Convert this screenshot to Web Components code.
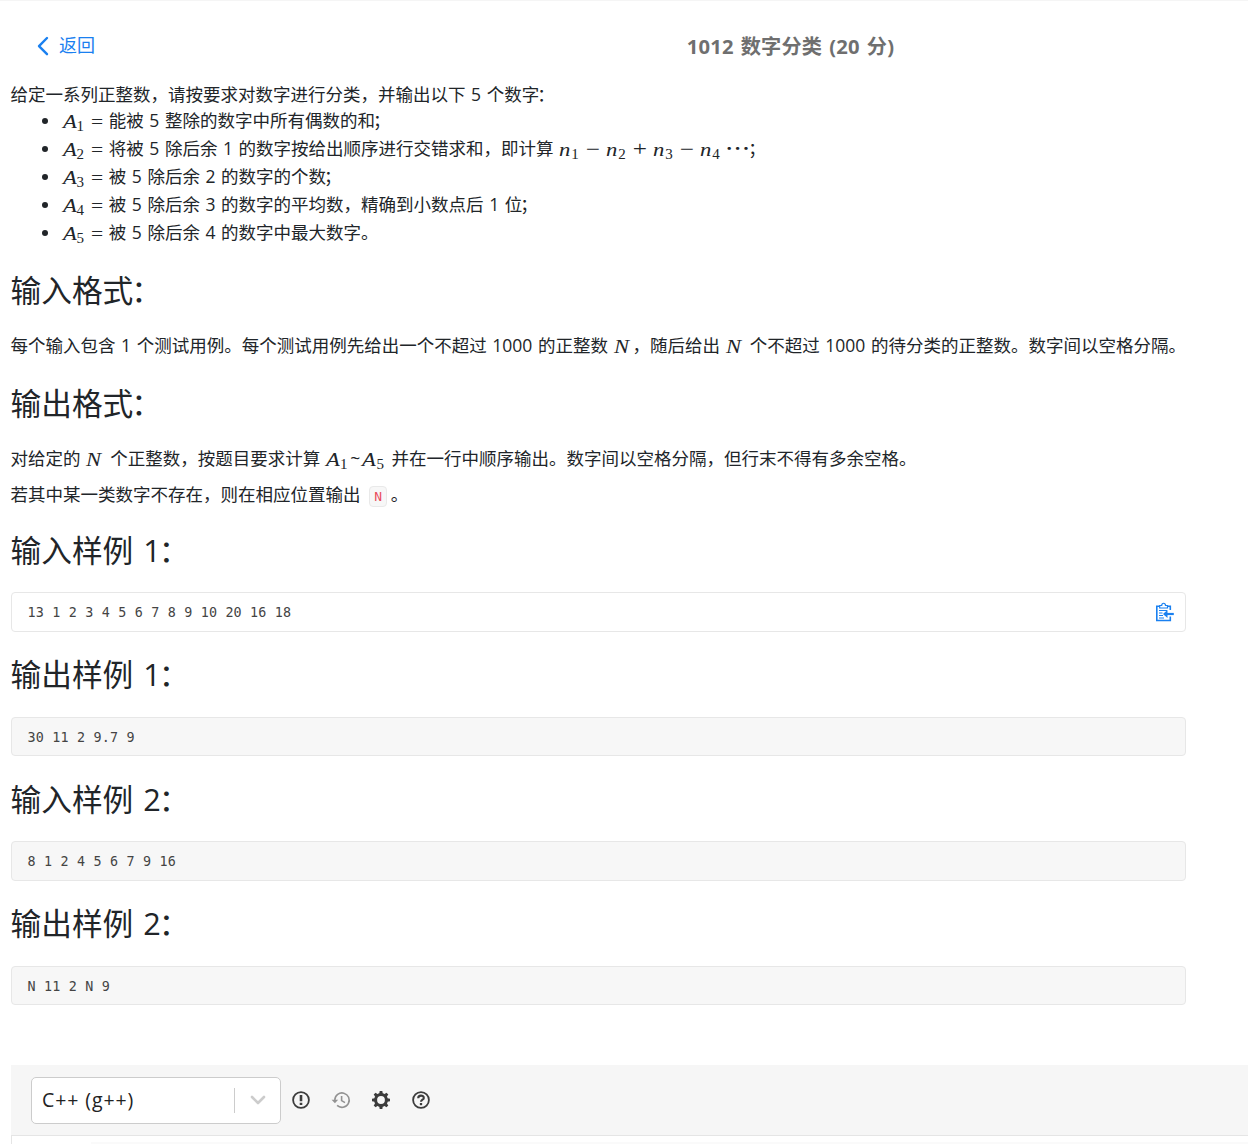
<!DOCTYPE html>
<html lang="zh-CN">
<head>
<meta charset="utf-8">
<title>1012 数字分类</title>
<style>
html,body{margin:0;height:1144px;overflow:hidden;background:#fff}
body{font-family:"Open Sans","Noto Sans CJK SC",sans-serif;font-size:17.5px;color:#212529}
</style>
</head>
<body>
<problem-page></problem-page>
<script>
const define=(name,css,html,hook)=>customElements.define(name,class extends HTMLElement{
  connectedCallback(){
    if(this.shadowRoot)return;
    const t=document.createElement('template');
    t.innerHTML='<style>'+css+'</style>'+html;
    this.attachShadow({mode:'open'}).append(t.content.cloneNode(true));
    if(hook)hook.call(this,this.shadowRoot);
  }
});

define('math-var',
 ':host{display:inline-block;white-space:nowrap;line-height:1;font-family:"Liberation Serif",serif;letter-spacing:0;word-spacing:0;vertical-align:-1px}i{display:inline-block;font-size:19.5px;transform:scaleX(1.16);transform-origin:0 50%;margin-right:2.200px}sub{font-size:15px;vertical-align:-2.5px;line-height:0}',
 '<i></i><sub></sub>',
 function(r){
  this.style.width=this.getAttribute('w')+'px';
  r.querySelector('i').textContent=this.getAttribute('v');
  const s=r.querySelector('sub');
  if(this.hasAttribute('s'))s.textContent=this.getAttribute('s');else s.remove();
 });

define('math-op',
 ':host{display:inline-block;text-align:center;line-height:1;font-family:"Liberation Serif",serif;font-size:21px;word-spacing:0;vertical-align:-1px}span{display:inline-block;transform:scaleX(1.2)}',
 '<span><slot></slot></span>',function(){this.style.width=this.getAttribute('w')+'px';});

define('text-line',
 ':host{display:block;white-space:nowrap;line-height:26px;height:28px;word-spacing:1.05px}',
 '<slot></slot>');

define('bullet-item',
 ':host{display:flex;align-items:center;height:28px;line-height:28px;padding-left:31px;white-space:nowrap;word-spacing:1.05px}b{width:6px;height:6px;border-radius:50%;background:#212529;margin-right:15px}div{height:28px;line-height:26px}',
 '<b></b><div><slot></slot></div>');

define('section-title',
 ':host{display:block;height:40px}h3{margin:0;font-size:30.7px;line-height:38px;font-weight:400;white-space:nowrap;word-spacing:2px}span{margin-left:-2px}',
 '<h3><slot></slot><span>：</span></h3>');

define('inline-code',
 ':host{display:inline-block;box-sizing:border-box;width:18px;height:21px;border:1px solid #e9e9e9;border-radius:4px;background:#f7f7f7;color:#e94b5b;text-align:center;font:13px/19px "DejaVu Sans Mono",monospace;vertical-align:.5px;margin:0 -2px 0 3px;word-spacing:0}',
 '<slot></slot>');

define('sample-block',
 ':host{display:flex;box-sizing:border-box;align-items:center;justify-content:space-between;height:var(--h,39px);border:1px solid #e7e7e7;border-radius:4px;background:#f7f7f7;padding:0 10px 0 15.5px;margin-left:.5px}:host([editable]){background:#fff}code{font:13.4px/20px "DejaVu Sans Mono",monospace;letter-spacing:.183px;color:#444;white-space:pre;padding-top:2px}',
 '<code><slot></slot></code><slot name="icon"></slot>');

define('paste-icon',
 ':host{display:block;width:20px;height:20px}svg{display:block}',
 `<svg width="20" height="20" viewBox="0 0 20 20" fill="none" stroke="#1a80f0">
  <path d="M15.3 8V4.2H1.8v14.3h13.5v-4" stroke-width="1.6"/>
  <path d="M4.700 6V3.500h2c.1-3 3.700-3 3.800 0h2V6z" fill="#fff" stroke-width="1.200"/>
  <path d="M4 8.500h8M4 11h3.500M4 13.500h4M4 16h5" stroke-width="1.200"/>
  <path d="M9.500 12h9.300" stroke-width="2.200"/><path d="M12.500 8 8 12l4.500 4z" fill="#1a80f0" stroke="none"/></svg>`);

define('back-link',
 ':host{display:flex;align-items:center;color:#1a80f0;font-size:18px;line-height:28px;height:28px}svg{margin-right:10px}span{padding-bottom:2px}',
 '<svg width="12" height="20" viewBox="0 0 12 20" fill="none" stroke="currentColor" stroke-width="2.400" stroke-linecap="round" stroke-linejoin="round"><path d="M10 2 2 10.200l8 8"/></svg><span><slot></slot></span>');

define('page-header',
 ':host{display:grid;grid-template-columns:333px 1fr;align-items:start;height:82px;box-sizing:border-box;border-top:1px solid #f5f5f5;padding:31px 0 0 37px}h1{margin:0;text-align:center;font-size:20.2px;line-height:28px;font-weight:700;color:#6f6f6f;word-spacing:1.6px;letter-spacing:.2px;width:841px}',
 '<back-link>返回</back-link><h1>1012 数字分类 (20 分)</h1>');

define('language-select',
 ':host{display:flex;box-sizing:border-box;width:250px;height:47px;border:1px solid #ccc;border-radius:5px;background:#fff;align-items:center;padding-left:10px;font-size:19.5px;color:#222}span{flex:1;white-space:nowrap;letter-spacing:.9px;padding-bottom:1px}i{width:1px;height:25px;background:#ccc;margin-right:15px}svg{margin-right:14px}',
 '<span><slot></slot></span><i></i><svg width="16" height="10" viewBox="0 0 16 10" fill="none" stroke="#ccc" stroke-width="2.600" stroke-linecap="round" stroke-linejoin="round"><path d="m2 2 6 6 6-6"/></svg>');

define('tool-icon',
 ':host{display:block;width:20px;height:20px}svg{display:block}',
 '<svg width="20" height="20" viewBox="0 0 20 20" fill="none" stroke="#3c3c3c" stroke-width="2"></svg>',
 function(r){
  let teeth='';
  for(let a=0;a<360;a+=45)teeth+=`<path d="M8 5 8.700 1h2.600l.7 4z" fill="#3c3c3c" stroke="none" transform="rotate(${a} 10 10)"/>`;
  r.querySelector('svg').innerHTML={
   alert:'<circle cx="10" cy="10" r="7.900" stroke-width="1.800"/><path d="M10 5v6.200M10 12.700v2.300" stroke-width="2.600"/>',
   history:'<g stroke="#929292" stroke-width="1.600"><path d="M3.800 10a7.200 7.200 0 1 1 2.300 5.400"/><path d="M10.600 6v4.600l3.400 2"/><path d="M.6 9.700h6.600l-3.300 3.500z" fill="#929292" stroke="none"/></g>',
   gear:'<circle cx="10" cy="10" r="5.400" stroke-width="3"/>'+teeth,
   help:'<circle cx="10" cy="10" r="7.900" stroke-width="1.800"/><path d="M7.200 8.200c0-3.500 5.600-3.300 5.600-.3 0 1.900-2.800 1.800-2.800 3.900" stroke-width="2.100"/><path d="M10 13v2.200" stroke-width="2.300"/>'
  }[this.getAttribute('kind')];
 });

define('editor-bar',
 ':host{display:block;margin:60px 0 0 11px}.bar{display:flex;align-items:center;gap:20px;height:70px;background:#f6f6f6;border-bottom:1px solid #e5e5e5;padding-left:20px}language-select{margin-right:-10px}.edit{height:8px;border-left:1px solid #e5e5e5;display:flex;align-items:flex-end}.edit i{flex:1;height:2px;margin-left:79px;background:#fafafa}',
 '<div class="bar"><language-select>C++ (g++)</language-select><tool-icon kind="alert"></tool-icon><tool-icon kind="history"></tool-icon><tool-icon kind="gear"></tool-icon><tool-icon kind="help"></tool-icon></div><div class="edit"><i></i></div>');

const A=n=>`<math-var v="A" s="${n}" w="23.500"></math-var> <math-op w="11.500" style="font-size:18px">=</math-op> `;
define('problem-page',
 `:host{display:block}main{width:1175.5px;padding-left:10.5px}
 .intro{height:25px;line-height:24px}
 .tilde{display:inline-block;width:12px;text-align:center;padding-right:1px}
 .end{margin-left:-2px}
 section-title{margin-top:20px}`,
 `<page-header></page-header>
 <main>
 <text-line class="intro">给定一系列正整数，请按要求对数字进行分类，并输出以下 5 个数字<span class="end">：</span></text-line>
 <bullet-item>${A(1)}能被 5 整除的数字中所有偶数的和<span class="end">；</span></bullet-item>
 <bullet-item>${A(2)}将被 5 除后余 1 的数字按给出顺序进行交错求和，即计算 <math-var v="n" s="1" w="21"></math-var><math-op w="26">−</math-op><math-var v="n" s="2" w="21"></math-var><math-op w="26">+</math-op><math-var v="n" s="3" w="21"></math-var><math-op w="26">−</math-op><math-var v="n" s="4" w="23"></math-var><math-op w="28">⋯</math-op><span style="margin-left:-3px">；</span></bullet-item>
 <bullet-item>${A(3)}被 5 除后余 2 的数字的个数<span class="end">；</span></bullet-item>
 <bullet-item>${A(4)}被 5 除后余 3 的数字的平均数，精确到小数点后 1 位<span class="end">；</span></bullet-item>
 <bullet-item>${A(5)}被 5 除后余 4 的数字中最大数字。</bullet-item>
 <section-title style="margin-top:24px">输入格式</section-title>
 <text-line style="margin-top:21px">每个输入包含 1 个测试用例。每个测试用例先给出一个不超过 1000 的正整数 <math-var v="N" w="19"></math-var>，随后给出 <math-var v="N" w="18.500"></math-var> 个不超过 1000 的待分类的正整数。数字间以空格分隔。</text-line>
 <section-title style="margin-top:24px">输出格式</section-title>
 <text-line style="margin-top:21px">对给定的 <math-var v="N" w="18.500"></math-var> 个正整数，按题目要求计算 <math-var v="A" s="1" w="23.500"></math-var><span class="tilde">~</span><math-var v="A" s="5" w="23.500"></math-var> 并在一行中顺序输出。数字间以空格分隔，但行末不得有多余空格。</text-line>
 <text-line style="margin-top:8px">若其中某一类数字不存在，则在相应位置输出 <inline-code>N</inline-code> 。</text-line>
 <section-title style="margin-top:22px">输入样例 1</section-title>
 <sample-block editable style="margin-top:21px;--h:40px">13 1 2 3 4 5 6 7 8 9 10 20 16 18<paste-icon slot="icon"></paste-icon></sample-block>
 <section-title style="margin-top:23px">输出样例 1</section-title>
 <sample-block style="margin-top:22px">30 11 2 9.7 9</sample-block>
 <section-title style="margin-top:24px">输入样例 2</section-title>
 <sample-block style="margin-top:21px;--h:40px">8 1 2 4 5 6 7 9 16</sample-block>
 <section-title style="margin-top:23px">输出样例 2</section-title>
 <sample-block style="margin-top:22px">N 11 2 N 9</sample-block>
 </main>
 <editor-bar></editor-bar>`);
</script>
</body>
</html>
